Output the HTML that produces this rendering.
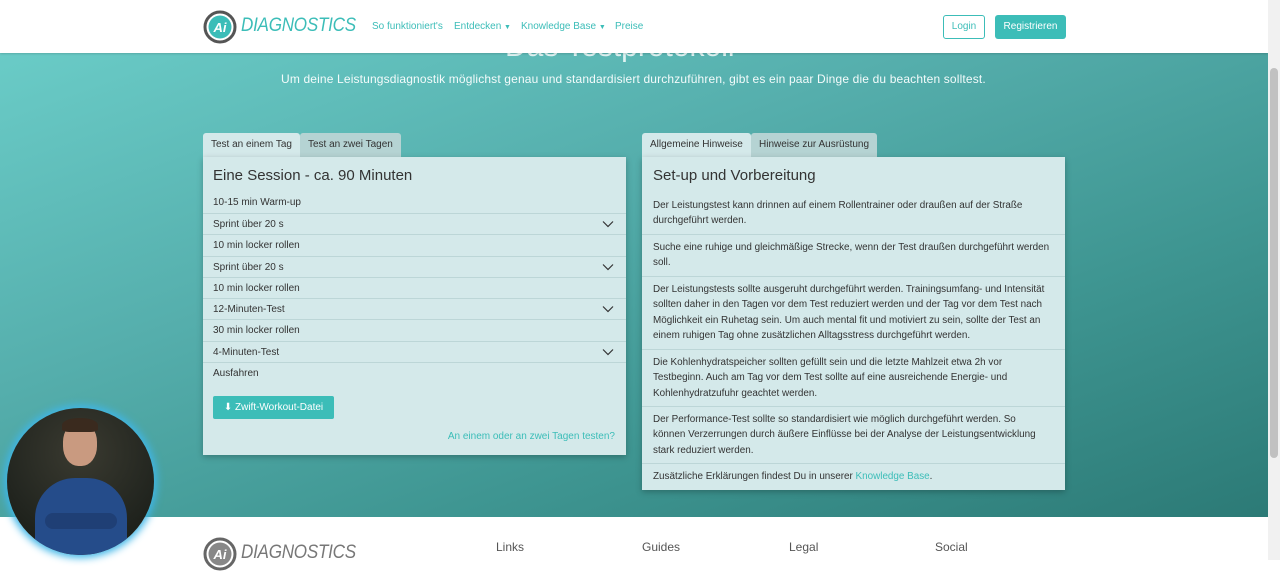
<!DOCTYPE html>
<html><head><meta charset="utf-8"><style>
*{margin:0;padding:0;box-sizing:border-box}
body{width:1280px;height:560px;overflow:hidden;position:relative;font-family:"Liberation Sans",sans-serif;color:#333;background:#fff}
.abs{position:absolute;white-space:nowrap}
#hero{position:absolute;left:0;top:0;width:1268px;height:517px;background:linear-gradient(160deg,#6dd0cb 0%,#55aeac 40%,#3e9591 70%,#2c7a76 100%)}
#nav{position:absolute;left:0;top:0;width:1268px;height:53px;background:#fff;box-shadow:0 1px 2px rgba(0,0,0,.15)}
#sb{position:absolute;left:1268px;top:0;width:12px;height:560px;background:#f1f1f1}
#sb div{position:absolute;left:2px;top:68px;width:8px;height:390px;background:#c1c1c1;border-radius:4px}
.nl{font-size:10px;color:#3cbdb8;top:21px}
.card{position:absolute;background:#d4e9ea;box-shadow:0 2px 6px rgba(0,0,0,.25)}
.tab{position:absolute;height:24px;font-size:10px;line-height:24px;padding:0 8px;border-radius:3px 3px 0 0}
.row{position:absolute;left:0;width:423px;height:21px;font-size:10px;line-height:21px;padding-left:10px;border-top:1px solid #bcd6d7}
.row.first{border-top:none}
.chev{position:absolute;right:12px;top:6px}
.item{position:absolute;left:0;width:423px;font-size:9.9px;line-height:15.3px;padding-left:11px;border-top:1px solid #bcd6d7;white-space:nowrap}
a{color:#3cbdb8}
.logo{font-size:19px;font-style:italic;letter-spacing:-.3px;transform:scaleX(.9);transform-origin:left}
</style></head><body>
<div id="hero"></div>
<div class="abs" style="left:505px;top:30px;font-size:30px;color:#eefaf9;opacity:.9">Das Testprotokoll</div>
<div class="abs" style="left:281px;top:72px;font-size:12px;color:#f3fbfb;letter-spacing:.15px">Um deine Leistungsdiagnostik möglichst genau und standardisiert durchzuführen, gibt es ein paar Dinge die du beachten solltest.</div>
<div id="nav"></div>
<svg class="abs" style="left:203px;top:10px" width="34" height="34" viewBox="0 0 34 34"><circle cx="17" cy="17" r="15" fill="none" stroke="#555" stroke-width="3"/><circle cx="17" cy="17" r="11.5" fill="#3cbdb8"/><text x="17" y="22" font-size="13" font-weight="bold" font-style="italic" fill="#fff" text-anchor="middle" font-family="Liberation Sans">Ai</text></svg>
<div class="abs logo" style="left:241px;top:15px;color:#3cbdb8">DIAGNOSTICS</div>
<div class="abs nl" style="left:372px">So funktioniert's</div>
<div class="abs nl" style="left:454px">Entdecken <span style="font-size:7px">▼</span></div>
<div class="abs nl" style="left:521px">Knowledge Base <span style="font-size:7px">▼</span></div>
<div class="abs nl" style="left:615px">Preise</div>
<div class="abs" style="left:943px;top:15px;width:42px;height:24px;border:1px solid #3cbdb8;border-radius:3px;font-size:10px;color:#3cbdb8;text-align:center;line-height:22px">Login</div>
<div class="abs" style="left:995px;top:15px;width:71px;height:24px;background:#3cbdb8;border-radius:3px;font-size:10px;color:#fff;text-align:center;line-height:24px">Registrieren</div>
<div id="sb"><div></div></div>

<div class="tab" style="left:203px;top:133px;background:#d4e9ea">Test an einem Tag</div>
<div class="tab" style="left:300px;top:133px;background:#b5d3d3">Test an zwei Tagen</div>
<div class="card" style="left:203px;top:157px;width:423px;height:298px">
<div class="abs" style="left:10px;top:10px;font-size:15px">Eine Session - ca. 90 Minuten</div>
<div class="row first" style="top:35px">10-15 min Warm-up</div>
<div class="row" style="top:56px">Sprint über 20 s<svg class="chev" width="12" height="8"><path d="M1 1.5L6 6.5L11 1.5" fill="none" stroke="#333" stroke-width="1.2"/></svg></div>
<div class="row" style="top:77px">10 min locker rollen</div>
<div class="row" style="top:99px">Sprint über 20 s<svg class="chev" width="12" height="8"><path d="M1 1.5L6 6.5L11 1.5" fill="none" stroke="#333" stroke-width="1.2"/></svg></div>
<div class="row" style="top:120px">10 min locker rollen</div>
<div class="row" style="top:141px">12-Minuten-Test<svg class="chev" width="12" height="8"><path d="M1 1.5L6 6.5L11 1.5" fill="none" stroke="#333" stroke-width="1.2"/></svg></div>
<div class="row" style="top:162px">30 min locker rollen</div>
<div class="row" style="top:184px">4-Minuten-Test<svg class="chev" width="12" height="8"><path d="M1 1.5L6 6.5L11 1.5" fill="none" stroke="#333" stroke-width="1.2"/></svg></div>
<div class="row" style="top:205px">Ausfahren</div>
<div class="abs" style="left:10px;top:239px;width:121px;height:23px;background:#3cbdb8;border-radius:2px;color:#fff;font-size:10px;line-height:23px;text-align:center">⬇ Zwift-Workout-Datei</div>
<div class="abs" style="right:11px;top:274px;font-size:10px"><a>An einem oder an zwei Tagen testen?</a></div>
</div>

<div class="tab" style="left:642px;top:133px;background:#d4e9ea">Allgemeine Hinweise</div>
<div class="tab" style="left:751px;top:133px;background:#b5d3d3">Hinweise zur Ausrüstung</div>
<div class="card" style="left:642px;top:157px;width:423px;height:333px">
<div class="abs" style="left:11px;top:10px;font-size:15px">Set-up und Vorbereitung</div>
<div class="item" style="top:40px;border-top:none;padding-top:1px">Der Leistungstest kann drinnen auf einem Rollentrainer oder draußen auf der Straße<br>durchgeführt werden.</div>
<div class="item" style="top:77px;padding-top:5px">Suche eine ruhige und gleichmäßige Strecke, wenn der Test draußen durchgeführt werden<br>soll.</div>
<div class="item" style="top:119px;padding-top:5px">Der Leistungstests sollte ausgeruht durchgeführt werden. Trainingsumfang- und Intensität<br>sollten daher in den Tagen vor dem Test reduziert werden und der Tag vor dem Test nach<br>Möglichkeit ein Ruhetag sein. Um auch mental fit und motiviert zu sein, sollte der Test an<br>einem ruhigen Tag ohne zusätzlichen Alltagsstress durchgeführt werden.</div>
<div class="item" style="top:192px;padding-top:5px">Die Kohlenhydratspeicher sollten gefüllt sein und die letzte Mahlzeit etwa 2h vor<br>Testbeginn. Auch am Tag vor dem Test sollte auf eine ausreichende Energie- und<br>Kohlenhydratzufuhr geachtet werden.</div>
<div class="item" style="top:249px;padding-top:5px">Der Performance-Test sollte so standardisiert wie möglich durchgeführt werden. So<br>können Verzerrungen durch äußere Einflüsse bei der Analyse der Leistungsentwicklung<br>stark reduziert werden.</div>
<div class="item" style="top:306px;padding-top:5px">Zusätzliche Erklärungen findest Du in unserer <a>Knowledge Base</a>.</div>
</div>

<svg class="abs" style="left:203px;top:537px" width="34" height="34" viewBox="0 0 34 34"><circle cx="17" cy="17" r="15" fill="none" stroke="#666" stroke-width="3"/><circle cx="17" cy="17" r="11.5" fill="#888"/><text x="17" y="22" font-size="13" font-weight="bold" font-style="italic" fill="#fff" text-anchor="middle">Ai</text></svg>
<div class="abs logo" style="left:241px;top:542px;color:#777">DIAGNOSTICS</div>
<div class="abs" style="left:496px;top:540px;font-size:12px;color:#555">Links</div>
<div class="abs" style="left:642px;top:540px;font-size:12px;color:#555">Guides</div>
<div class="abs" style="left:789px;top:540px;font-size:12px;color:#555">Legal</div>
<div class="abs" style="left:935px;top:540px;font-size:12px;color:#555">Social</div>

<div class="abs" style="left:7px;top:408px;width:147px;height:147px;border-radius:50%;background:radial-gradient(circle at 50% 30%,#3a3a30 0%,#232620 60%,#151812 100%);box-shadow:0 0 8px 3px #3fb6e8;overflow:hidden">
<div style="position:absolute;left:28px;top:70px;width:92px;height:90px;border-radius:40px 40px 0 0;background:#254c8a"></div>
<div style="position:absolute;left:56px;top:14px;width:34px;height:44px;border-radius:45%;background:#c99a80"></div>
<div style="position:absolute;left:55px;top:10px;width:36px;height:14px;border-radius:50% 50% 20% 20%;background:#3a2a1e"></div>
<div style="position:absolute;left:38px;top:105px;width:72px;height:16px;border-radius:8px;background:#1f3f75"></div>
</div>
</body></html>
